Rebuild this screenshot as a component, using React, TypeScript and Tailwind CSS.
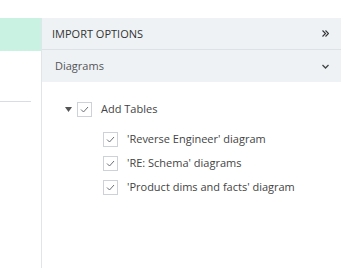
import React from "react";

const Check = () => (
  <span className="flex h-[15px] w-[15px] items-center justify-center border border-[#cdd2d8] bg-white">
    <svg width="9" height="7" viewBox="0 0 9 7" fill="none">
      <path d="M1 3.5 L3.5 6 L8 1" stroke="#6b7077" strokeWidth="1" />
    </svg>
  </span>
);

export default function App() {
  const font = { fontFamily: '"Open Sans", "Noto Sans", sans-serif' };
  return (
    <div className="flex h-[268px] w-[341px] bg-white" style={font}>
      <div className="flex w-[41px] flex-col pt-[18px]">
        <div className="h-[33px] bg-[#c9f2e2]" />
        <div className="mt-[50px] h-px w-[31px] bg-[#d8dde4]" />
      </div>
      <div className="mt-[18px] w-px bg-[#e1e5ea]" />
      <div className="mt-[18px] flex flex-1 flex-col">
        <div className="flex h-[32px] items-center justify-between border-b border-[#dde2e7] bg-[#eef2f5] pl-[10px] pr-[12px] pt-[2px]">
          <span className="text-[11px] text-[#333]">IMPORT OPTIONS</span>
          <svg width="7" height="7" viewBox="0 0 7 7" fill="none" className="mb-[2px]">
            <path d="M0.5 0.5 L3.5 3.5 L0.5 6.5 M3.5 0.5 L6.5 3.5 L3.5 6.5" stroke="#333" strokeWidth="1.1" />
          </svg>
        </div>
        <div className="flex h-[32px] items-center justify-between bg-[#eef2f5] pl-[13px] pr-[12px] pt-[1px]">
          <span className="text-[11px] text-[#555]">Diagrams</span>
          <svg width="7" height="5" viewBox="0 0 7 5" fill="none">
            <path d="M0.5 1 L3.5 4 L6.5 1" stroke="#444" strokeWidth="1.3" />
          </svg>
        </div>
        <div className="flex flex-col pt-[19px]">
          <div className="flex h-[16px] items-center pl-[23px]">
            <svg width="7" height="5" viewBox="0 0 7 5" className="mr-[5px]">
              <path d="M0 0 L7 0 L3.5 5 Z" fill="#555" />
            </svg>
            <Check />
            <span className="ml-[9px] text-[11px] text-[#444]">Add Tables</span>
          </div>
          <div className="mt-[14px] flex flex-col gap-[8px] pl-[61px]">
            {["'Reverse Engineer' diagram", "'RE: Schema' diagrams", "'Product dims and facts' diagram"].map((t) => (
              <div key={t} className="flex h-[16px] items-center">
                <Check />
                <span className="ml-[9px] text-[11px] text-[#444]">{t}</span>
              </div>
            ))}
          </div>
        </div>
      </div>
    </div>
  );
}
